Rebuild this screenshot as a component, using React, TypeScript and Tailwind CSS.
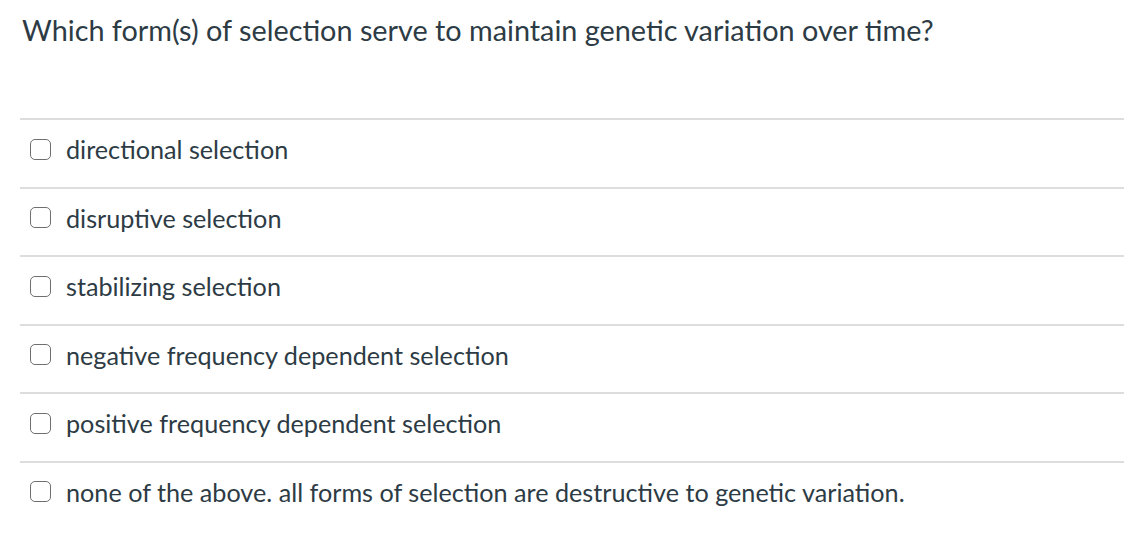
const options = [
  'directional selection',
  'disruptive selection',
  'stabilizing selection',
  'negative frequency dependent selection',
  'positive frequency dependent selection',
  'none of the above. all forms of selection are destructive to genetic variation.',
];

export default function App() {
  return (
    <div className="min-h-screen bg-white pl-5 text-[#2d3b45]" style={{ fontFamily: 'Lato, "Open Sans", sans-serif' }}>
      <div className="pt-3 pb-[70px] pl-[2px] text-[28.8px] leading-[36px]">
        Which form(s) of selection serve to maintain genetic variation over time?
      </div>
      <div>
        {options.map((opt) => (
          <label key={opt} className="flex items-center gap-[15px] border-t-2 border-[#dddddd] pl-[10px] pt-[15px] pb-[23.6px]">
            <span className="h-[21px] w-[21px] shrink-0 rounded-[5px] border-[1.6px] border-[#6f6f6f] bg-white" />
            <span className="text-[25.2px] leading-[28px]">{opt}</span>
          </label>
        ))}
      </div>
    </div>
  );
}
